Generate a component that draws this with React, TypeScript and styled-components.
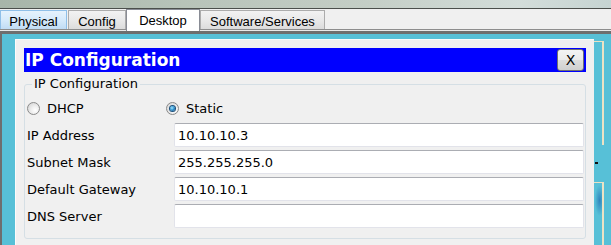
import React from 'react';
import styled, { createGlobalStyle } from 'styled-components';

const GlobalStyle = createGlobalStyle`
  html, body {
    margin: 0;
    padding: 0;
  }
  body {
    font-family: "DejaVu Sans", Verdana, sans-serif;
    background: #f0f0f0;
  }
  #root {
    width: 611px;
    height: 245px;
    overflow: hidden;
  }
`;

const Screen = styled.div`
  width: 611px;
  height: 245px;
  display: flex;
  flex-direction: column;
  overflow: hidden;
`;

const TopStrip = styled.div`
  height: 8px;
  flex-shrink: 0;
  border-bottom: 1px solid #4b4f4c;
  background: linear-gradient(90deg, #a7b5a9 0%, #b7c3b9 30%, #c4cec6 60%, #d3ddda 85%, #c6d4d2 100%);
`;

const TabBar = styled.div`
  height: 20px;
  flex-shrink: 0;
  display: flex;
  align-items: flex-end;
  background: #f0f0f0;
  border-bottom: 1px solid #8d8d8d;
`;

const Tab = styled.div<{ $w: number; $variant?: 'hover' | 'active' }>`
  width: ${p => p.$w}px;
  box-sizing: border-box;
  display: flex;
  align-items: center;
  justify-content: center;
  font-family: "Liberation Sans", Arial, sans-serif;
  font-size: 13px;
  color: #000;
  border: 1px solid #acacac;
  border-bottom: none;
  height: 19px;
  padding-top: 2px;
  background: linear-gradient(#f2f2f2, #e9e9e9 50%, #dcdcdc);

  ${p =>
    p.$variant === 'hover' &&
    `
    border-color: #8fbfe8;
    background: linear-gradient(#e6f2fc, #d6eafb 50%, #c0dcf4);
  `}

  ${p =>
    p.$variant === 'active' &&
    `
    position: relative;
    z-index: 1;
    height: 22px;
    margin-bottom: -2px;
    padding-top: 0;
    border-color: #898c95;
    background: #ffffff;
  `}
`;

const Divider = styled.div`
  height: 1px;
  flex-shrink: 0;
  background: #e9e9e9;
  border-bottom: 3px solid #6e6e6e;
`;

const Content = styled.div`
  flex: 1;
  min-height: 0;
  display: flex;
  background: #57c0d7;
  border-left: 2px solid #6e6e6e;
  padding: 5px 0 0 13px;
`;

const Panel = styled.div`
  width: 579px;
  flex-shrink: 0;
  box-sizing: border-box;
  background: #f0f0f0;
  border-top: 1px solid #fbfbfb;
  border-left: 1px solid #fbfbfb;
  padding: 8px 8px 0 8px;
`;

const TitleBar = styled.div`
  height: 24px;
  display: flex;
  justify-content: space-between;
  align-items: flex-start;
  background: #0000ff;
  padding: 0 2px 0 1px;
`;

const Title = styled.div`
  color: #fff;
  font-weight: bold;
  font-size: 17px;
  line-height: 24px;
`;

const CloseButton = styled.button`
  width: 27px;
  height: 22px;
  margin-top: 1px;
  padding: 0;
  box-sizing: border-box;
  border: 1px solid #707070;
  border-radius: 3px;
  background: linear-gradient(#f3f3f3 0%, #ebebeb 48%, #dddddd 52%, #cfcfcf 100%);
  font-family: "DejaVu Sans", Verdana, sans-serif;
  font-size: 14px;
  color: #000;
  display: flex;
  align-items: center;
  justify-content: center;
`;

const Group = styled.fieldset`
  margin: 4px 0 0;
  padding: 0 1px 10px 2px;
  border: 1px solid #d5dfe5;
  border-radius: 3px;
  min-width: 0;
`;

const Legend = styled.legend`
  margin-left: 5px;
  padding: 0 2px;
  font-size: 13px;
  line-height: 16px;
  color: #000;
`;

const RadioRow = styled.div`
  height: 24px;
  margin-top: 4px;
  display: flex;
  align-items: center;
`;

const RadioOption = styled.div<{ $w?: number }>`
  display: flex;
  align-items: center;
  gap: 7px;
  width: ${p => (p.$w ? `${p.$w}px` : 'auto')};
  font-size: 13px;
  color: #000;
`;

const RadioDot = styled.span<{ $checked?: boolean }>`
  width: 13px;
  height: 13px;
  box-sizing: border-box;
  border-radius: 50%;
  border: 1px solid #8a8a8a;
  background: radial-gradient(circle at 65% 65%, #ffffff 0%, #f0f0f0 35%, #cfcfcf 100%);
  display: flex;
  align-items: center;
  justify-content: center;

  &::after {
    content: '';
    display: ${p => (p.$checked ? 'block' : 'none')};
    width: 5px;
    height: 5px;
    border-radius: 50%;
    background: radial-gradient(circle at 40% 40%, #a8ecff 0%, #2b8fd0 50%, #0b3b66 100%);
    box-shadow: 0 0 0 1px #1c4f7a;
  }
`;

const FieldRow = styled.div`
  display: grid;
  grid-template-columns: 147px 1fr;
  align-items: center;
  height: 24px;
  margin-top: 3px;
`;

const FieldLabel = styled.span`
  font-size: 13px;
  color: #000;
`;

const FieldInput = styled.input`
  height: 24px;
  box-sizing: border-box;
  border: 1px solid #e2e3ea;
  border-top-color: #abadb3;
  border-radius: 2px;
  padding: 0 3px;
  background: #fff;
  font-family: "DejaVu Sans", Verdana, sans-serif;
  font-size: 13px;
  color: #000;
  outline: none;
`;

const Gutter = styled.div`
  width: 17px;
  flex-shrink: 0;
  display: flex;
  flex-direction: column;
`;

const FrameEdge = styled.div<{ $h?: number; $top: number }>`
  width: 10px;
  box-sizing: border-box;
  margin-top: ${p => p.$top}px;
  height: ${p => (p.$h ? `${p.$h}px` : 'auto')};
  flex: ${p => (p.$h ? 'none' : '1')};
  border-top: 1px solid #ece2c4;
  border-right: 2px solid #ece2c4;
  background: ${p =>
    p.$h ? 'transparent' : 'radial-gradient(ellipse 60% 25% at 70% 28%, #2f85bd 0%, rgba(87,192,215,0) 100%)'};
`;

const Mark = styled.div`
  width: 3px;
  height: 2px;
  margin: 17px 0 0 1px;
  background: #111;
`;

const fields = [
  { label: 'IP Address', value: '10.10.10.3' },
  { label: 'Subnet Mask', value: '255.255.255.0' },
  { label: 'Default Gateway', value: '10.10.10.1' },
  { label: 'DNS Server', value: '' },
];

export default function App() {
  return (
    <>
      <GlobalStyle />
      <Screen>
        <TopStrip />
        <TabBar>
          <Tab $w={67} $variant="hover" style={{ marginRight: 1 }}>Physical</Tab>
          <Tab $w={58}>Config</Tab>
          <Tab $w={74} $variant="active">Desktop</Tab>
          <Tab $w={125}>Software/Services</Tab>
        </TabBar>
        <Divider />
        <Content>
          <Panel>
            <TitleBar>
              <Title>IP Configuration</Title>
              <CloseButton type="button">X</CloseButton>
            </TitleBar>
            <Group>
              <Legend>IP Configuration</Legend>
              <RadioRow>
                <RadioOption $w={139}>
                  <RadioDot />
                  DHCP
                </RadioOption>
                <RadioOption>
                  <RadioDot $checked />
                  Static
                </RadioOption>
              </RadioRow>
              {fields.map(f => (
                <FieldRow key={f.label}>
                  <FieldLabel>{f.label}</FieldLabel>
                  <FieldInput readOnly defaultValue={f.value} />
                </FieldRow>
              ))}
            </Group>
          </Panel>
          <Gutter>
            <FrameEdge $top={2} $h={104} />
            <Mark />
            <FrameEdge $top={18} />
          </Gutter>
        </Content>
      </Screen>
    </>
  );
}
